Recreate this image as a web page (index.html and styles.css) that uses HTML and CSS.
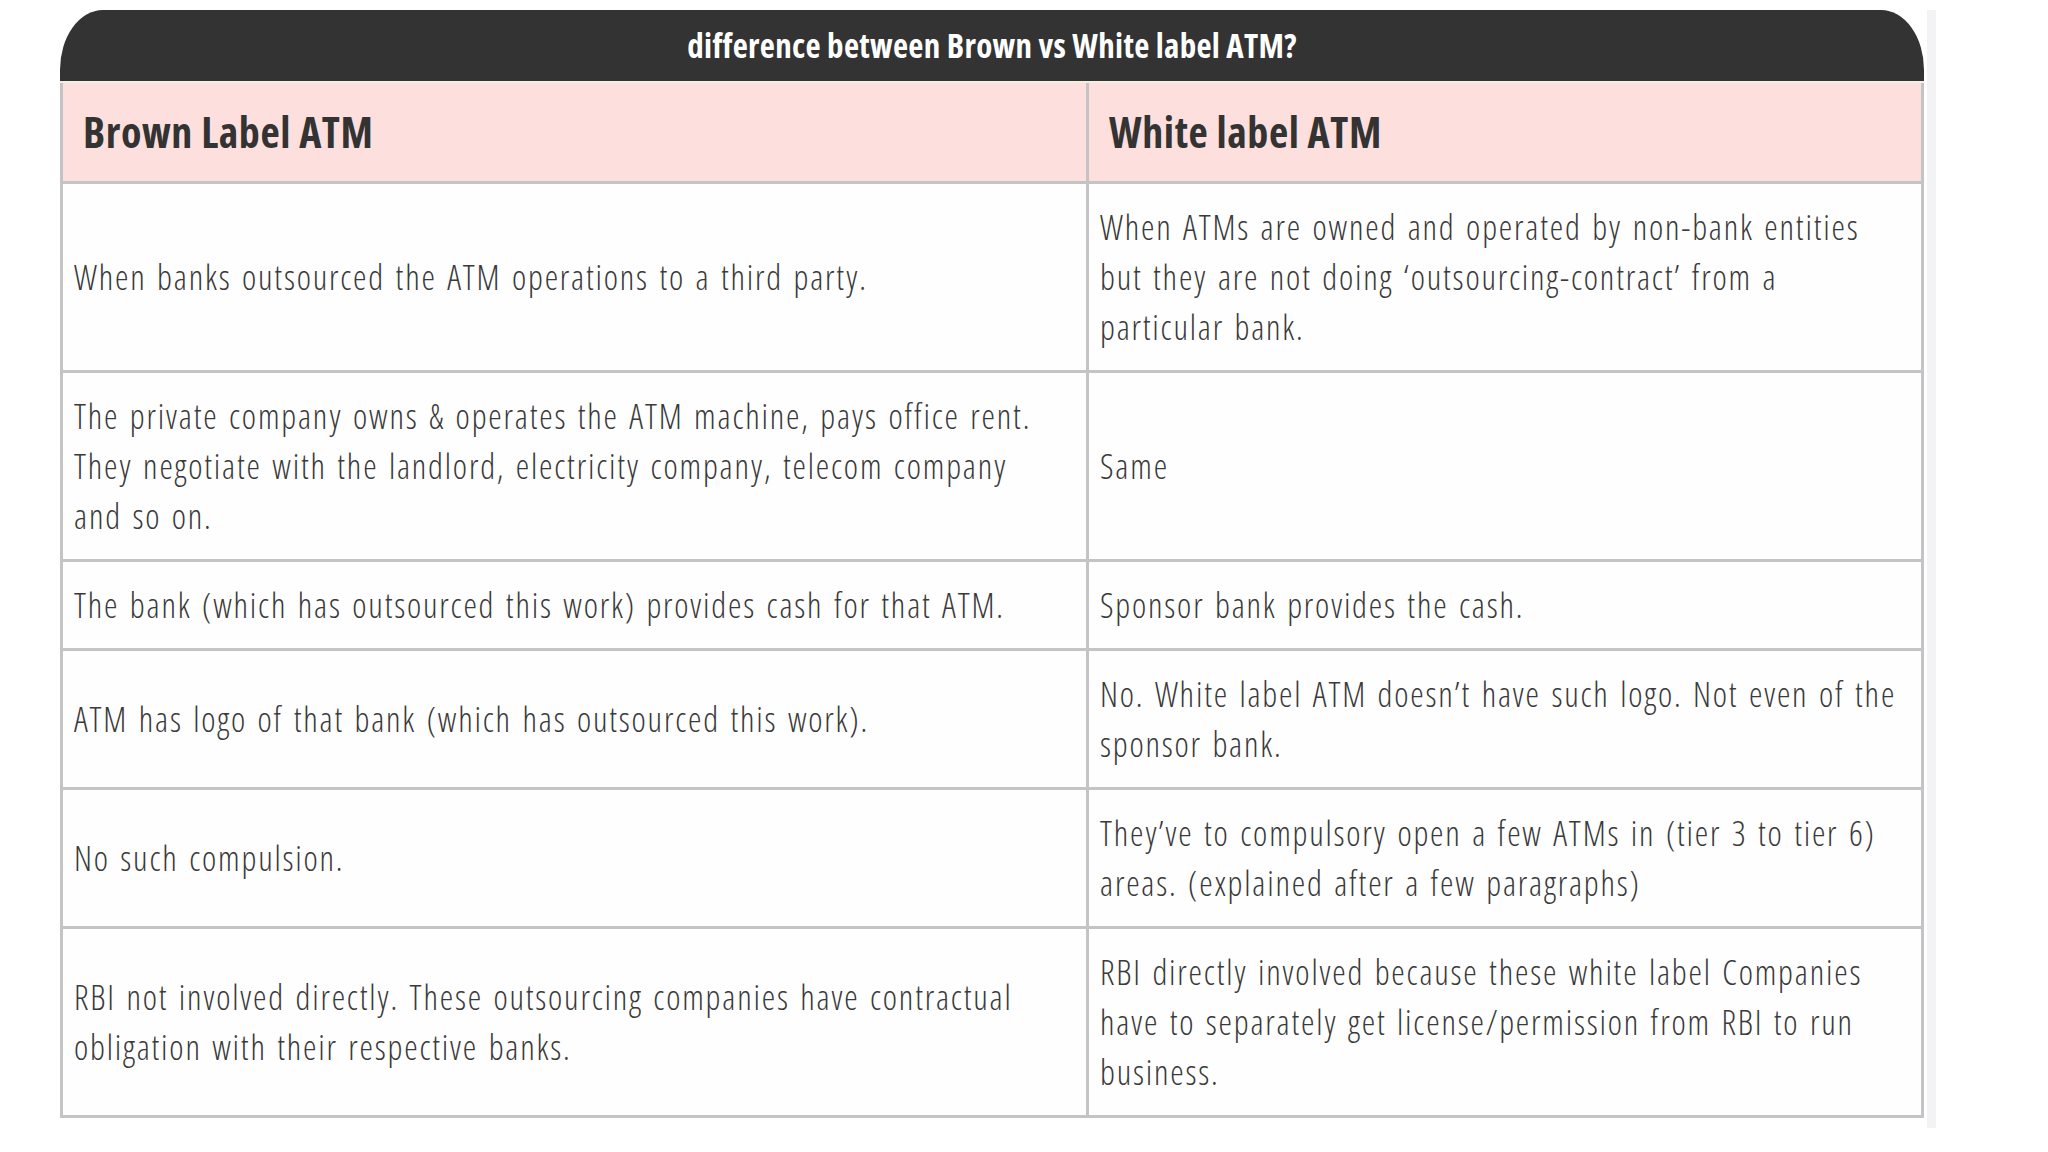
FILE: index.html
```html
<!DOCTYPE html>
<html lang="en">
<head>
<meta charset="utf-8">
<title>Brown vs White label ATM</title>
<link rel="stylesheet" href="styles.css">
</head>
<body>
<div class="page">
  <div class="card">
    <div class="title">difference between Brown vs White label ATM?</div>
    <table class="cmp">
      <colgroup><col class="col-a"><col class="col-b"></colgroup>
      <thead>
        <tr><th>Brown Label ATM</th><th>White label ATM</th></tr>
      </thead>
      <tbody>
        <tr>
          <td class="a">When banks outsourced the ATM operations to a third party.</td>
          <td class="b">When ATMs are owned and operated by non-bank entities but they are not doing ‘outsourcing-contract’ from a particular bank.</td>
        </tr>
        <tr>
          <td class="a">The private company owns &amp; operates the ATM machine, pays office rent. They negotiate with the landlord, electricity company, telecom company and so on.</td>
          <td class="b">Same</td>
        </tr>
        <tr>
          <td class="a">The bank (which has outsourced this work) provides cash for that ATM.</td>
          <td class="b">Sponsor bank provides the cash.</td>
        </tr>
        <tr>
          <td class="a">ATM has logo of that bank (which has outsourced this work).</td>
          <td class="b">No. White label ATM doesn’t have such logo. Not even of the sponsor bank.</td>
        </tr>
        <tr>
          <td class="a">No such compulsion.</td>
          <td class="b">They’ve to compulsory open a few ATMs in (tier 3 to tier 6) areas. (explained after a few paragraphs)</td>
        </tr>
        <tr>
          <td class="a">RBI not involved directly. These outsourcing companies have contractual obligation with their respective banks.</td>
          <td class="b">RBI directly involved because these white label Companies have to separately get license/permission from RBI to run business.</td>
        </tr>
      </tbody>
    </table>
  </div>
  <div class="strip"></div>
</div>
</body>
</html>
```

FILE: styles.css
```css
html, body {
  margin: 0;
  padding: 0;
  background: #ffffff;
}

body {
  font-family: "Open Sans", "Liberation Sans", sans-serif;
  font-stretch: 75%;
  color: #3a3a3a;
}

.page {
  display: flex;
  align-items: flex-start;
  gap: 3px;
  padding: 10px 0 0 60px;
}

.card {
  width: 1864px;
}

.title {
  height: 71px;
  line-height: 71px;
  background: #333333;
  color: #ffffff;
  font-weight: 700;
  font-size: 33px;
  letter-spacing: 0.3px;
  text-align: center;
  border-radius: 43px 43px 0 0 / 60px 60px 0 0;
  border-bottom: 2px solid #f1efe4;
}

.cmp {
  width: 1864px;
  border-collapse: collapse;
  table-layout: fixed;
}

.col-a {
  width: 1026px;
}

.cmp th,
.cmp td {
  border: 3px solid #c4c4c6;
  text-align: left;
  vertical-align: middle;
}

.cmp thead th {
  border-top: none;
  background: #fde0dd;
  font-weight: 700;
  font-size: 42px;
  letter-spacing: 0.6px;
  line-height: 50px;
  padding: 24px 20px;
  color: #333333;
}

.cmp td {
  font-weight: 300;
  font-size: 34px;
  letter-spacing: 1.8px;
  word-spacing: 2.4px;
  line-height: 50px;
  padding: 18px 11px;
  background: #fefefe;
}

.cmp td.a {
  padding-right: 40px;
}

.cmp td.b {
  padding-right: 22px;
}

.strip {
  width: 9px;
  height: 1118px;
  background: #f3f3f5;
}
```
